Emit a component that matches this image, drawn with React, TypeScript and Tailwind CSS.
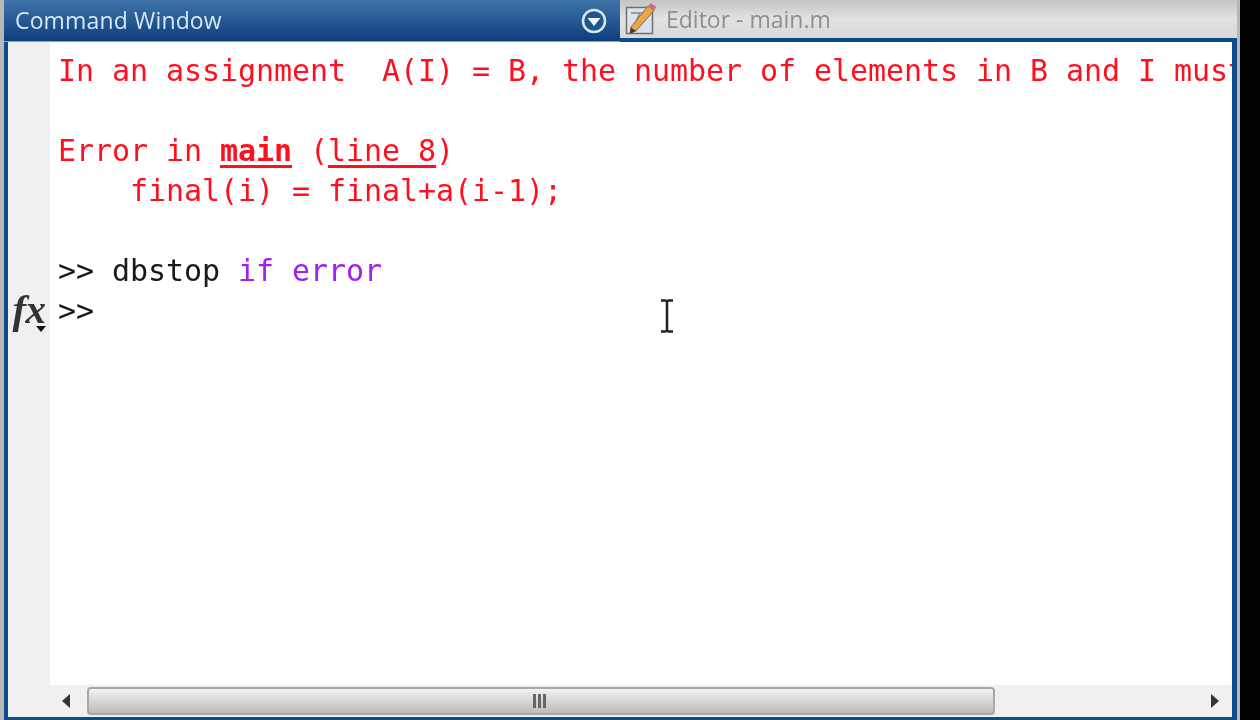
const mono = "font-['DejaVu_Sans_Mono','Liberation_Mono',monospace] text-[30px] leading-[40px] tracking-[-0.06px] whitespace-pre h-10"

const EditorIcon = () => (
  <svg width="36" height="36" viewBox="0 0 36 36" className="shrink-0">
    <rect x="3.5" y="6.5" width="26" height="26" fill="#dbe4ee" stroke="#6f6f6f" strokeWidth="1.5" />
    <path d="M8 12h13M17 12l-5 10" stroke="#8a8a8a" strokeWidth="1.5" fill="none" />
    <path d="M25 5l6 4.5L13 30l-6 2.5 1-6.5z" fill="#e8a848" stroke="#8a6a30" strokeWidth="1" />
    <path d="M25 5l3-3 5.5 4-2.5 3.500z" fill="#d66a8c" />
    <path d="M7 32.500l1-6 5 3.500z" fill="#3a3a3a" />
  </svg>
)

const IBeam = () => (
  <svg width="16" height="34" viewBox="0 0 16 34">
    <path d="M2 1.500h4.500l1.500 1 1.500-1H14M8 3v28M2 32.500h4.500l1.500-1 1.500 1H14" stroke="#222" strokeWidth="2.500" fill="none" />
  </svg>
)

export default function App() {
  return (
    <div className="w-[1260px] h-[720px] bg-black overflow-hidden flex">
      <div className="w-[1240px] h-full flex flex-col bg-[#b8b8b8] pl-[4px] pr-[3px] blur-[0.4px]">
        {/* title row */}
        <div className="h-[42px] flex shrink-0">
          <div className="w-[616px] flex items-center justify-between pl-[11px] pr-[13px] bg-gradient-to-b from-[#3f74a8] to-[#0c3f7d] border-b border-[#7fa6cc]">
            <span className="font-['Open_Sans','Noto_Sans',sans-serif] text-[23px] tracking-[0.15px] text-[#d6e6f5]">Command Window</span>
            <svg width="26" height="26" viewBox="0 0 26 26">
              <circle cx="13" cy="13" r="11" fill="#1f568f" stroke="#d8e6f2" strokeWidth="2.500" />
              <path d="M6.500 10h13L13 18z" fill="#f2f6fa" />
            </svg>
          </div>
          <div className="flex-1 flex items-center gap-[7px] pl-[3px] bg-gradient-to-b from-[#c4c4c4] via-[#e2e2e2] to-[#d8d8d8] border-b-4 border-[#0f4a8c]">
            <EditorIcon />
            <span className="font-['Open_Sans','Noto_Sans',sans-serif] text-[23px] text-[#8f8f8f]">Editor - main.m</span>
          </div>
        </div>

        {/* console body */}
        <div className="flex-1 min-h-0 flex flex-col bg-white border-l-4 border-r-[5px] border-b-[3px] border-[#0f4a8c] overflow-hidden">
          <div className="flex-1 min-h-0 flex">
            <div className="w-[42px] shrink-0 bg-[#f0f0f0] flex flex-col items-center pt-[247px]">
              <span className="font-['Liberation_Serif',serif] italic font-bold text-[41px] leading-[40px] tracking-[-0.5px] text-[#333]">fx</span>
              <svg width="10" height="6" viewBox="0 0 10 6" className="-mt-[3px] ml-[24px]"><path d="M0 0h10L5 6z" fill="#111" /></svg>
            </div>
            <div className="relative flex-1 min-w-0 pl-[8px] pt-[9px] overflow-hidden">
              <div className={`${mono} text-[#ff1020]`}>In an assignment  A(I) = B, the number of elements in B and I must</div>
              <div className={mono}> </div>
              <div className={`${mono} text-[#ff1020]`}>
                Error in <span className="font-bold underline underline-offset-[4px]">main</span> (<span className="underline underline-offset-[4px]">line 8</span>)
              </div>
              <div className={`${mono} text-[#ff1020]`}>    final(i) = final+a(i-1);</div>
              <div className={mono}> </div>
              <div className={`${mono} text-[#1a1a1a]`}>
                &gt;&gt; dbstop <span className="text-[#a020f0]">if error</span>
              </div>
              <div className={`${mono} text-[#1a1a1a]`}>&gt;&gt;</div>
              {/* mouse cursor over the console */}
              <div className="absolute left-[609px] top-[257px]">
                <IBeam />
              </div>
            </div>
          </div>
          {/* horizontal scrollbar */}
          <div className="h-[32px] shrink-0 flex bg-[#f0f0f0] py-[2px]">
            <div className="w-[42px] shrink-0" />
            <div className="w-[37px] shrink-0 flex items-center justify-start pl-[11px]">
              <svg width="10" height="14" viewBox="0 0 10 14"><path d="M9 0v14L1 7z" fill="#333" /></svg>
            </div>
            <div className="w-[908px] shrink-0 flex items-center justify-center rounded-sm border-2 border-[#a8a8a8] bg-gradient-to-b from-[#f2f2f2] to-[#bcbcbc] gap-[2px] pr-[4px]">
              <span className="w-[3px] h-[14px] bg-[#666]" />
              <span className="w-[3px] h-[14px] bg-[#666]" />
              <span className="w-[3px] h-[14px] bg-[#666]" />
            </div>
            <div className="flex-1 flex items-center justify-end pr-[12px]">
              <svg width="10" height="14" viewBox="0 0 10 14"><path d="M1 0v14l8-7z" fill="#333" /></svg>
            </div>
          </div>
        </div>
      </div>
    </div>
  )
}
